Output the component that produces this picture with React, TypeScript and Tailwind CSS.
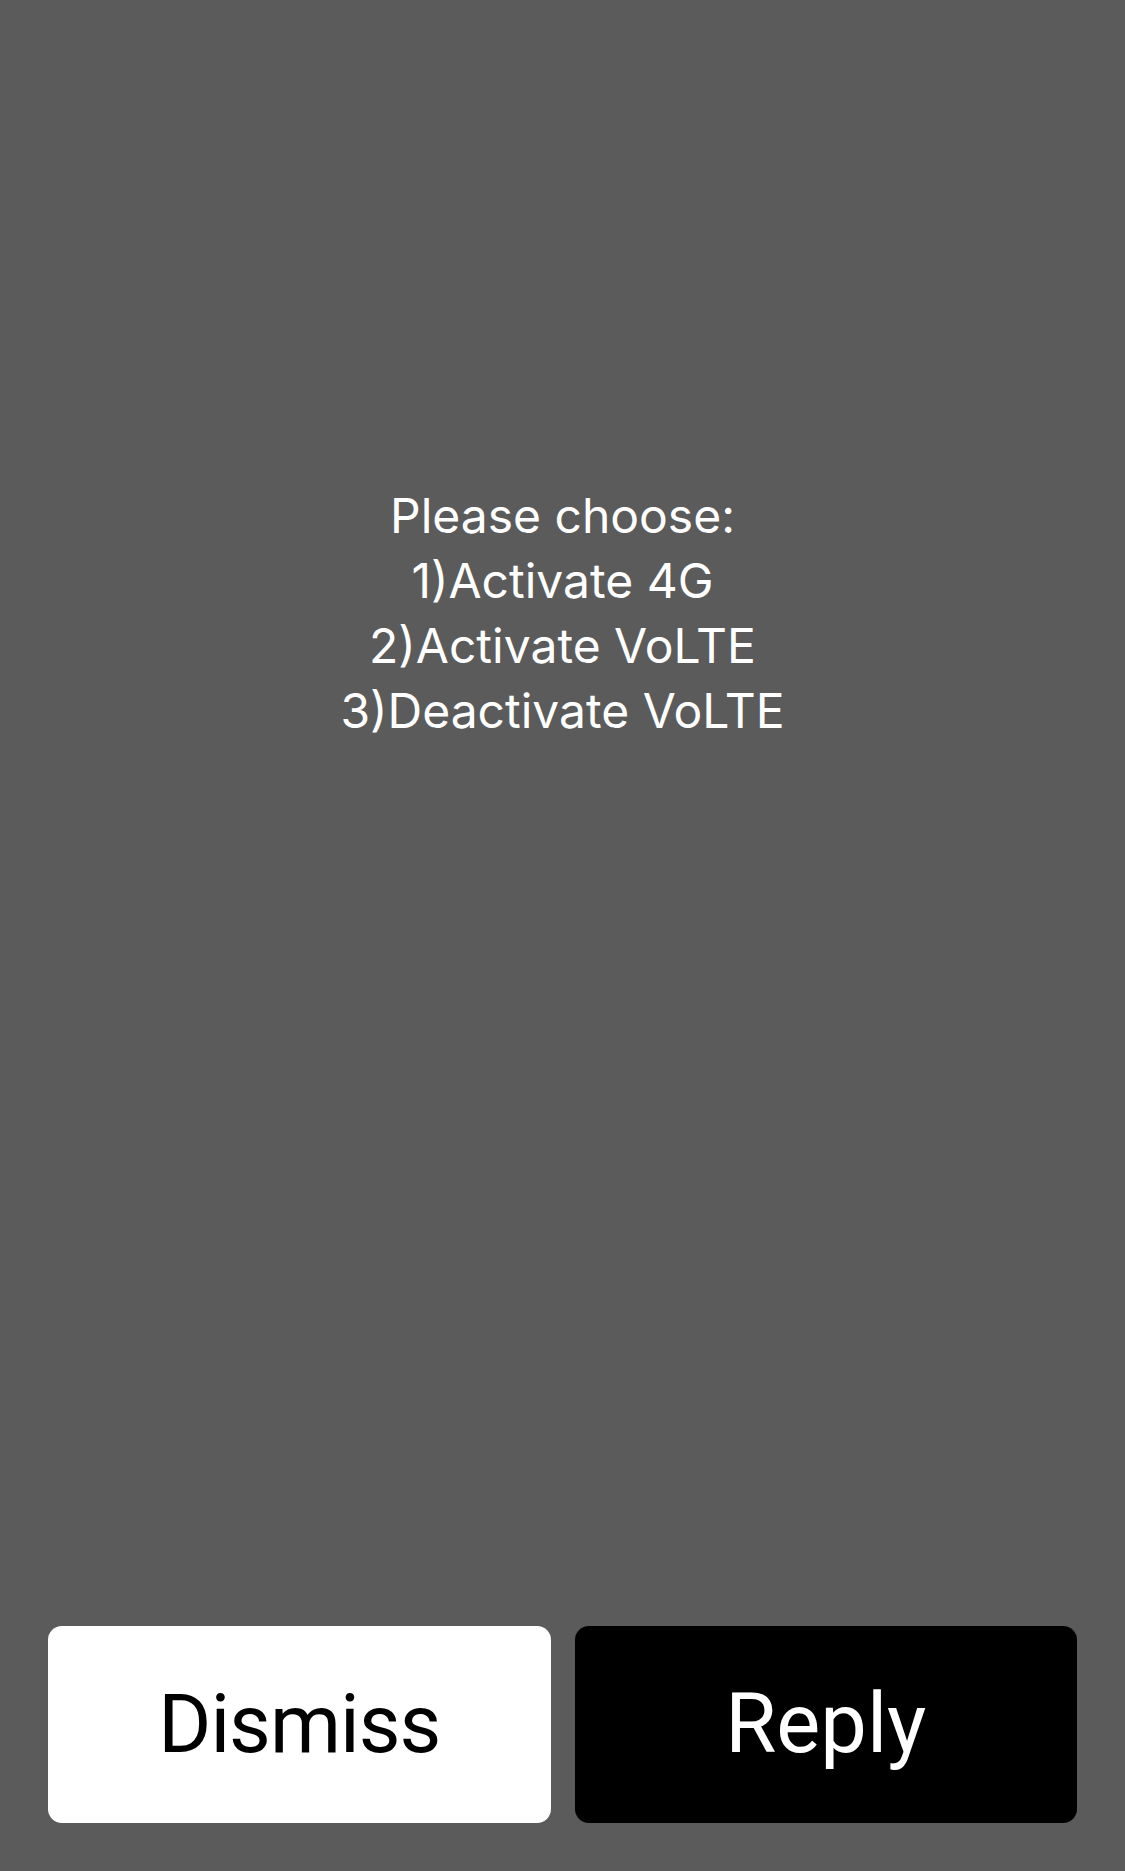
export default function App() {
  return (
    <div className="flex h-[1871px] w-full flex-col bg-[#5b5b5b] font-['Inter','Noto_Sans',sans-serif]">
      {/* Message body */}
      <div className="flex flex-1 flex-col items-center pt-[483px] text-center text-[48px] leading-[65px] text-white">
        <p>Please choose:</p>
        <p>1)Activate 4G</p>
        <p>2)Activate VoLTE</p>
        <p>3)Deactivate VoLTE</p>
      </div>

      {/* Action buttons */}
      <div className="flex gap-6 px-12 pb-12 font-['Roboto',sans-serif]">
        <button className="flex h-[197px] flex-1 items-center justify-center rounded-[14px] bg-white text-[81px] tracking-[-1px] text-black">
          Dismiss
        </button>
        <button className="flex h-[197px] flex-1 items-center justify-center rounded-[14px] bg-black text-[83px] text-white">
          Reply
        </button>
      </div>
    </div>
  );
}
